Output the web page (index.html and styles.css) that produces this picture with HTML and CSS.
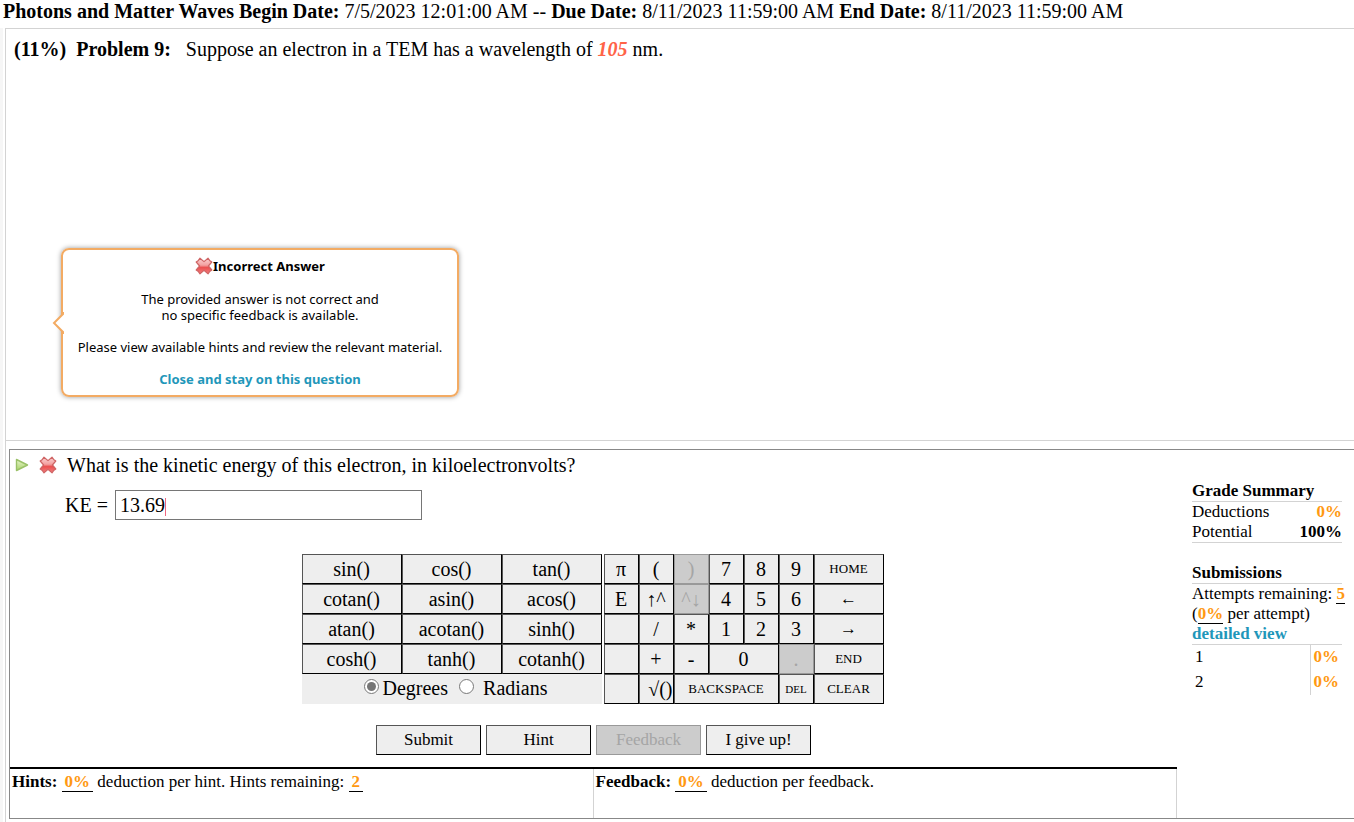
FILE: index.html
```html
<!DOCTYPE html>
<html lang="en">
<head>
<meta charset="utf-8">
<title>Photons and Matter Waves</title>
<link rel="stylesheet" href="styles.css">
</head>
<body>
<svg class="defs" aria-hidden="true">
  <defs>
    <linearGradient id="red" x1="0" y1="0" x2="0" y2="1"><stop offset="0" stop-color="#fbd3d3"/><stop offset=".45" stop-color="#f3a0a0"/><stop offset=".6" stop-color="#ea4f4f"/><stop offset="1" stop-color="#f38080"/></linearGradient>
    <linearGradient id="green" x1="0" y1="0" x2="0" y2="1"><stop offset="0" stop-color="#e6f3cc"/><stop offset="1" stop-color="#a9d468"/></linearGradient>
  </defs>
  <symbol id="cross" viewBox="0 0 18 18"><path d="M5 1.2 9 4.6 13 1.2 14.6 3.4 16.8 5 13.4 9 16.8 13 14.6 14.6 13 16.8 9 13.4 5 16.8 3.4 14.6 1.2 13 4.6 9 1.2 5 3.4 3.4Z" fill="url(#red)" stroke="#cf6464" stroke-width="1.2" stroke-linejoin="round"/></symbol>
</svg>
<header class="assignment"><b>Photons and Matter Waves</b> <b>Begin Date:</b> 7/5/2023 12:01:00 AM -- <b>Due Date:</b> 8/11/2023 11:59:00 AM <b>End Date:</b> 8/11/2023 11:59:00 AM</header>
<main class="page">
  <div class="frame">
    <section class="statement">
      <p><b>(11%)</b>&nbsp; <b>Problem 9:</b> &nbsp; Suppose an electron in a TEM has a wavelength of <b class="value">105</b> nm.</p>
      <div class="popup" role="dialog" aria-label="Incorrect Answer">
        <svg class="pointer" viewBox="0 0 12 24"><path d="M11 1v2L2 12l9 9v2" fill="#fff" stroke="#f3ab63" stroke-width="2"/></svg>
        <h2><svg class="icon"><use href="#cross"/></svg>Incorrect Answer</h2>
        <p>The provided answer is not correct and<br>no specific feedback is available.</p>
        <p>Please view available hints and review the relevant material.</p>
        <a href="#question">Close and stay on this question</a>
      </div>
    </section>
    <section class="question" id="question">
      <div class="work">
        <div class="prompt">
          <svg class="play" viewBox="0 0 14 14"><path d="M1.5 1.5 12.5 7 1.5 12.5Z" fill="url(#green)" stroke="#9ac168" stroke-width="1.4" stroke-linejoin="round"/></svg>
          <svg class="icon"><use href="#cross"/></svg>
          <span>What is the kinetic energy of this electron, in kiloelectronvolts?</span>
        </div>
        <div class="answer">
          <label for="ke">KE =</label>
          <div class="field"><input id="ke" type="text" value="13.69"><span class="caret"></span></div>
        </div>
        <div class="pads">
          <div class="functions">
            <button>sin()</button><button>cos()</button><button>tan()</button>
            <button>cotan()</button><button>asin()</button><button>acos()</button>
            <button>atan()</button><button>acotan()</button><button>sinh()</button>
            <button>cosh()</button><button>tanh()</button><button>cotanh()</button>
            <div class="units">
              <label><input type="radio" name="unit" checked>Degrees</label>
              <label><input type="radio" name="unit">&nbsp;Radians</label>
            </div>
          </div>
          <div class="keys">
            <button>π</button><button>(</button><button disabled>)</button><button>7</button><button>8</button><button>9</button><button class="word">HOME</button>
            <button>E</button><button>↑^</button><button disabled>^↓</button><button>4</button><button>5</button><button>6</button><button class="arrow">←</button>
            <button aria-label="blank"></button><button>/</button><button>*</button><button>1</button><button>2</button><button>3</button><button class="arrow">→</button>
            <button aria-label="blank"></button><button>+</button><button>-</button><button class="two">0</button><button disabled>.</button><button class="word">END</button>
            <button aria-label="blank"></button><button class="root">√()</button><button class="word three">BACKSPACE</button><button class="tiny">DEL</button><button class="word">CLEAR</button>
          </div>
        </div>
        <div class="actions">
          <button>Submit</button><button>Hint</button><button disabled>Feedback</button><button>I give up!</button>
        </div>
        <div class="help">
          <div><b>Hints:</b> <b class="amount wide">0%</b> deduction per hint. Hints remaining: <b class="amount wide">2</b></div>
          <div><b>Feedback:</b> <b class="amount wide">0%</b> deduction per feedback.</div>
        </div>
      </div>
      <aside class="summary">
        <h3>Grade Summary</h3>
        <dl>
          <div><dt>Deductions</dt><dd class="pct">0%</dd></div>
          <div><dt>Potential</dt><dd>100%</dd></div>
        </dl>
        <h3>Submissions</h3>
        <p>Attempts remaining: <b class="amount">5</b></p>
        <p>(<b class="amount">0%</b> per attempt)</p>
        <a href="#question">detailed view</a>
        <table>
          <tr><td>1</td><td class="pct">0%</td></tr>
          <tr><td>2</td><td class="pct">0%</td></tr>
        </table>
      </aside>
    </section>
  </div>
</main>
</body>
</html>
```
FILE: styles.css
```css
* { box-sizing: border-box; }
body {
  margin: 0;
  min-height: 100vh;
  display: flex;
  flex-direction: column;
  overflow: hidden;
  background: #fff;
  color: #000;
  font: 20px/22px "Liberation Serif", "Times New Roman", serif;
}
p, h2, h3, dl, dd { margin: 0; }
button, input { font: inherit; color: inherit; margin: 0; }
a { color: #1f97ba; font-weight: bold; text-decoration: none; }
.defs { position: absolute; width: 0; height: 0; }
.icon { width: 18px; height: 18px; flex: none; }

.assignment { padding: 0 3px 6px; white-space: nowrap; }
.page { flex: 1; display: flex; padding-left: 2px; border-left: 3px solid #f6f6f6; }
.frame { flex: 1; border: solid #d3d3d3; border-width: 1px 0 0 1px; }

.statement { min-height: 412px; padding: 9px 8px 42px; border-bottom: 1px solid #d3d3d3; }
.value { color: #ff6347; font-style: italic; }
.popup {
  position: relative;
  width: 398px;
  margin: 188px 0 0 47px;
  padding: 7px 4px 8px;
  border: 2px solid #f3ab63;
  border-radius: 8px;
  box-shadow: 0 0 5px #999;
  font: 13px/16px "Noto Sans", "Trebuchet MS", sans-serif;
  text-align: center;
}
.popup h2 { display: flex; justify-content: center; align-items: center; font-size: 13px; line-height: 18px; }
.popup p { margin: 16px 0; white-space: nowrap; }
.popup a { display: block; }
.pointer { position: absolute; left: -11px; top: 61px; width: 12px; height: 24px; }

.question { display: grid; grid-template-columns: 1fr 177px; margin: 8px 0 3px 3px; border: solid #888; border-width: 1px 0 1px 1px; }
.statement { padding-bottom: 32px; }
.work { display: flex; flex-direction: column; }
.prompt { display: flex; align-items: center; padding: 4px 5px 0; }
.play { width: 14px; height: 14px; margin-right: 10px; }
.prompt .icon { margin-right: 10px; }
.answer { display: flex; align-items: center; gap: 7px; margin: 14px 0 0 55px; }
.field { position: relative; width: 307px; }
.field input { display: block; width: 100%; height: 30px; padding: 0 4px; border: 1px solid #767676; background: #fff; }
.caret { position: absolute; left: 50px; top: 8px; width: 1px; height: 18px; background: #ee6680; }

.pads { display: flex; justify-content: center; gap: 2px; margin-top: 34px; padding-right: 2px; }
.functions { display: grid; grid-template-columns: repeat(3, 100px); grid-auto-rows: 30px; background: #eee; }
.keys { display: grid; grid-template-columns: repeat(6, 35px) 70px; grid-auto-rows: 30px; }
.work button { padding: 0; border: 1px solid; border-color: #555 #000 #000 #555; border-radius: 0; background: #eee; white-space: nowrap; }
.work button:disabled { background: #ccc; border-color: #999; color: #a5a5a5; }
.units { grid-column: span 3; display: flex; justify-content: center; gap: 11px; padding: 0 0 2px 8px; }
.units label { display: flex; align-items: center; gap: 4px; }
.units input { width: 15px; height: 15px; margin-bottom: 4px; accent-color: #767676; }
.keys .word { font-size: 13px; }
.keys .arrow { font-size: 17px; }
.keys .tiny { font-size: 11px; }
.keys .two { grid-column: span 2; }
.keys .three { grid-column: span 3; }
.keys .root { text-align: right; }

.actions { display: flex; justify-content: center; gap: 5px; margin: 21px 0 12px; font-size: 17px; }
.actions button { width: 105px; height: 30px; }
.help { display: grid; grid-template-columns: 1fr 1fr; min-height: 51px; border-top: 2px solid #000; font-size: 17px; line-height: 20px; }
.help > div { padding: 3px 2px; border-right: 1px solid #d3d3d3; }

.amount, .pct { color: #ff9912; font-weight: bold; }
.amount { border-bottom: 1px solid #000; }
.wide { padding: 0 3px; }

.summary { padding: 31px 12px 0 15px; font-size: 17px; line-height: 20px; }
.summary h3 { font-size: 17px; border-bottom: 1px solid #d3d3d3; }
.summary dl { margin-bottom: 20px; border-bottom: 1px solid #d3d3d3; }
.summary dl div { display: flex; justify-content: space-between; }
.summary dd { font-weight: bold; }
.summary p { white-space: nowrap; }
.summary a { display: block; }
.summary table { width: 100%; border-collapse: collapse; border-top: 1px solid #d3d3d3; }
.summary td { height: 25px; padding: 0 3px; }
.summary td:last-child { width: 31px; border-left: 1px solid #d3d3d3; }
```
